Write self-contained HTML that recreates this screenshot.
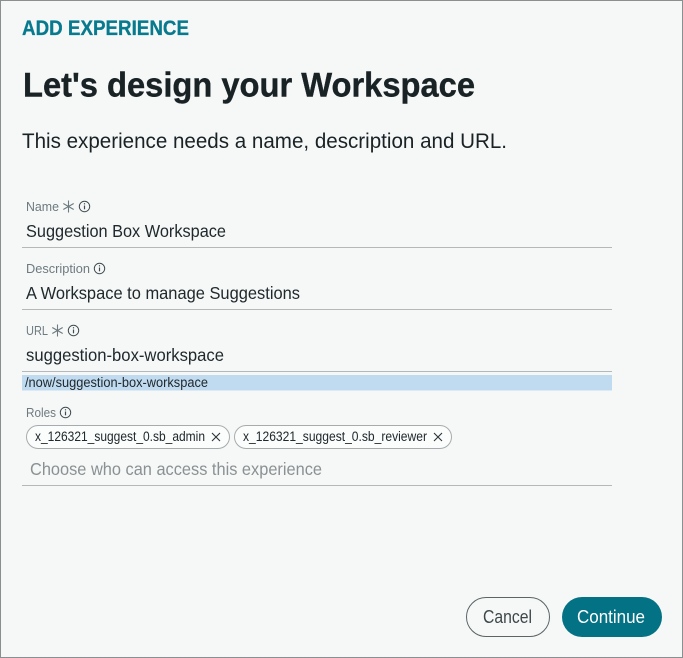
<!DOCTYPE html>
<html>
<head>
<meta charset="utf-8">
<style>
html,body{margin:0;padding:0;width:683px;height:658px;overflow:hidden;background:#f6f8f8}
svg{display:block;position:absolute;left:0;top:0}
text{font-family:"Liberation Sans",sans-serif}
</style>
</head>
<body>
<svg width="683" height="658" viewBox="0 0 683 658" xmlns="http://www.w3.org/2000/svg">
<rect width="683" height="658" fill="#f6f8f8"/>
<rect x="0.5" y="0.5" width="682" height="657" fill="none" stroke="#8c8f90"/>

<text x="22" y="35" font-size="21.5" font-weight="700" fill="#087a8e" stroke="#087a8e" stroke-width="0.3" textLength="167" lengthAdjust="spacingAndGlyphs">ADD EXPERIENCE</text>
<text x="23" y="96.5" font-size="34.5" font-weight="700" fill="#192225" stroke="#192225" stroke-width="0.4" textLength="452" lengthAdjust="spacingAndGlyphs">Let's design your Workspace</text>
<text x="22" y="148" font-size="21.5" fill="#192225" textLength="485" lengthAdjust="spacingAndGlyphs">This experience needs a name, description and URL.</text>

<!-- Name -->
<text x="26" y="211" font-size="13" fill="#6d7a7e" textLength="33" lengthAdjust="spacingAndGlyphs">Name</text>
<g stroke="#6d7a7e" stroke-width="1.1" fill="none"><path d="M68.5 200.5v12M63.3 203.5l10.4 6M73.7 203.5l-10.4 6"/></g>
<g stroke="#3f4b4f" fill="none"><circle cx="84.5" cy="206.5" r="5.2"/><path d="M84.5 205.5v3.8" stroke-width="1.2"/><path d="M84.5 203.2v1.2" stroke-width="1.2"/></g>
<text x="26" y="237" font-size="17.5" fill="#20292c" textLength="200" lengthAdjust="spacingAndGlyphs">Suggestion Box Workspace</text>
<rect x="22" y="247" width="590" height="1" fill="#b3b9ba"/>

<!-- Description -->
<text x="26" y="273" font-size="13" fill="#6d7a7e" textLength="64" lengthAdjust="spacingAndGlyphs">Description</text>
<g stroke="#3f4b4f" fill="none"><circle cx="99.5" cy="268.5" r="5.2"/><path d="M99.5 267.5v3.8" stroke-width="1.2"/><path d="M99.5 265.2v1.2" stroke-width="1.2"/></g>
<text x="26" y="299" font-size="17.5" fill="#20292c" textLength="274" lengthAdjust="spacingAndGlyphs">A Workspace to manage Suggestions</text>
<rect x="22" y="309" width="590" height="1" fill="#b3b9ba"/>

<!-- URL -->
<text x="26" y="335" font-size="13" fill="#6d7a7e" textLength="22" lengthAdjust="spacingAndGlyphs">URL</text>
<g stroke="#6d7a7e" stroke-width="1.1" fill="none"><path d="M57.5 324.5v12M52.3 327.5l10.4 6M62.7 327.5l-10.4 6"/></g>
<g stroke="#3f4b4f" fill="none"><circle cx="73.5" cy="330.5" r="5.2"/><path d="M73.5 329.5v3.8" stroke-width="1.2"/><path d="M73.5 327.2v1.2" stroke-width="1.2"/></g>
<text x="26" y="361" font-size="17.5" fill="#20292c" textLength="198" lengthAdjust="spacingAndGlyphs">suggestion-box-workspace</text>
<rect x="22" y="371" width="590" height="1" fill="#b3b9ba"/>
<rect x="22" y="375" width="590" height="15.5" fill="#c0dbf0"/>
<text x="25" y="387" font-size="13.5" fill="#20292c" textLength="183" lengthAdjust="spacingAndGlyphs">/now/suggestion-box-workspace</text>

<!-- Roles -->
<text x="26" y="417" font-size="13" fill="#6d7a7e" textLength="30" lengthAdjust="spacingAndGlyphs">Roles</text>
<g stroke="#3f4b4f" fill="none"><circle cx="65.5" cy="412.5" r="5.2"/><path d="M65.5 411.5v3.8" stroke-width="1.2"/><path d="M65.5 409.2v1.2" stroke-width="1.2"/></g>

<rect x="26.5" y="425.5" width="203" height="23" rx="11.5" fill="#fbfcfc" stroke="#a6acad"/>
<text x="35" y="441" font-size="13.5" fill="#20292c" textLength="170" lengthAdjust="spacingAndGlyphs">x_126321_suggest_0.sb_admin</text>
<path d="M212 433l8 8M220 433l-8 8" stroke="#2a3437" stroke-width="1.1" fill="none"/>

<rect x="234.5" y="425.5" width="217" height="23" rx="11.5" fill="#fbfcfc" stroke="#a6acad"/>
<text x="243" y="441" font-size="13.5" fill="#20292c" textLength="184" lengthAdjust="spacingAndGlyphs">x_126321_suggest_0.sb_reviewer</text>
<path d="M434 433l8 8M442 433l-8 8" stroke="#2a3437" stroke-width="1.1" fill="none"/>

<text x="30" y="475" font-size="17.5" fill="#8b9192" textLength="292" lengthAdjust="spacingAndGlyphs">Choose who can access this experience</text>
<rect x="22" y="485" width="590" height="1" fill="#b3b9ba"/>

<!-- Buttons -->
<rect x="466.5" y="597.5" width="83" height="39" rx="19.5" fill="#f6f8f8" stroke="#5c6466"/>
<text x="483" y="623" font-size="18.5" fill="#3d4749" textLength="49" lengthAdjust="spacingAndGlyphs">Cancel</text>
<rect x="562" y="597" width="100" height="40" rx="20" fill="#047285"/>
<text x="577" y="623" font-size="18.5" fill="#ffffff" textLength="68" lengthAdjust="spacingAndGlyphs">Continue</text>
</svg>
</body>
</html>
